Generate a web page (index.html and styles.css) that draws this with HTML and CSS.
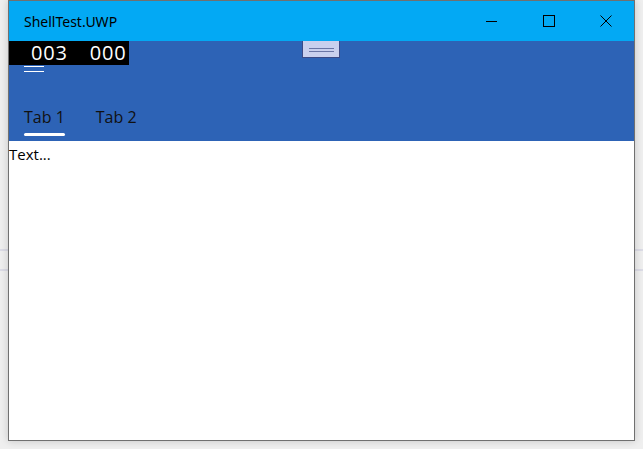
FILE: index.html
```html
<!DOCTYPE html>
<html>
<head>
<meta charset="utf-8">
<link rel="stylesheet" href="styles.css">
</head>
<body>
<div class="desktop">
  <div class="bgline bgline1"></div>
  <div class="bgline bgline2"></div>
  <div class="window">
    <div class="titlebar">
      <span class="title">ShellTest.UWP</span>
      <div class="controls">
        <div class="ctl">
          <svg width="12" height="12" viewBox="0 0 12 12"><path d="M0 6.5h11" stroke="#000" stroke-width="1"/></svg>
        </div>
        <div class="ctl">
          <svg width="12" height="12" viewBox="0 0 12 12"><rect x="0.5" y="0.5" width="11" height="11" fill="none" stroke="#000" stroke-width="1"/></svg>
        </div>
        <div class="ctl">
          <svg width="12" height="12" viewBox="0 0 12 12"><path d="M0.5 0.5L11.5 11.5M11.5 0.5L0.5 11.5" stroke="#000" stroke-width="1"/></svg>
        </div>
      </div>
    </div>
    <div class="header">
      <div class="counter"><span>003</span><span>000</span></div>
      <div class="handle"><div class="grip"></div></div>
      <div class="hamburger"><i></i><i></i></div>
      <div class="tabs">
        <div class="tab active">Tab 1</div>
        <div class="tab">Tab 2</div>
      </div>
    </div>
    <div class="content">Text...</div>
  </div>
</div>
</body>
</html>
```

FILE: styles.css
```css
html, body {
  margin: 0;
  padding: 0;
}
body {
  width: 643px;
  height: 449px;
  overflow: hidden;
  background: #efefef;
  font-family: "Open Sans", "Noto Sans", sans-serif;
}
.desktop {
  position: relative;
  width: 643px;
  height: 449px;
}
.bgline {
  position: absolute;
  left: 0;
  right: 0;
  height: 2px;
  background: #dcdce6;
}
.bgline1 { top: 249px; }
.bgline2 { top: 269px; }
.window {
  position: absolute;
  left: 8px;
  top: 0;
  width: 625px;
  height: 439px;
  border: 1px solid #707070;
  background: #fff;
  box-shadow: 0 0 8px rgba(0,0,0,0.18);
  display: flex;
  flex-direction: column;
}
.titlebar {
  height: 40px;
  background: #03a9f4;
  display: flex;
  align-items: center;
  flex-shrink: 0;
}
.title {
  margin-left: 15px;
  font-size: 14px;
  color: #000;
  font-family: "Noto Sans", "Open Sans", sans-serif;
  margin-top: 1px;
}
.controls {
  margin-left: auto;
  display: flex;
}
.ctl {
  width: 57px;
  height: 40px;
  display: flex;
  align-items: center;
  justify-content: center;
}
.ctl svg { display: block; }
.header {
  position: relative;
  height: 100px;
  background: #2d63b6;
  flex-shrink: 0;
}
.counter {
  position: absolute;
  left: 0;
  top: 0;
  width: 120px;
  height: 24px;
  background: #000;
  color: #fff;
  font-size: 20px;
  font-weight: 500;
  letter-spacing: 0.8px;
  line-height: 23px;
  display: flex;
  gap: 22px;
  padding-left: 22px;
  box-sizing: border-box;
  z-index: 2;
}
.handle {
  position: absolute;
  left: 293px;
  top: 0;
  width: 36px;
  height: 16px;
  background: #c9d0ee;
  border: 1px solid #3b4a86;
  border-top: none;
  display: flex;
  align-items: center;
  justify-content: center;
}
.grip {
  width: 25px;
  height: 2px;
  border-top: 1px solid #6a76a6;
  border-bottom: 1px solid #6a76a6;
  margin-top: 1px;
}
.hamburger {
  position: absolute;
  left: 15px;
  top: 25px;
  width: 20px;
  display: flex;
  flex-direction: column;
  gap: 4px;
}
.hamburger i {
  display: block;
  height: 1px;
  background: #fff;
}
.tabs {
  position: absolute;
  left: 15px;
  top: 64px;
  display: flex;
  gap: 31px;
}
.tab {
  position: relative;
  font-size: 16px;
  color: #111;
  line-height: 24px;
}
.tab.active::after {
  content: "";
  position: absolute;
  left: 0;
  right: 0;
  top: 28px;
  height: 3px;
  border-radius: 2px;
  background: #fff;
}
.content {
  flex: 1;
  font-size: 15px;
  color: #000;
  line-height: 20px;
  padding-top: 3px;
}
```
